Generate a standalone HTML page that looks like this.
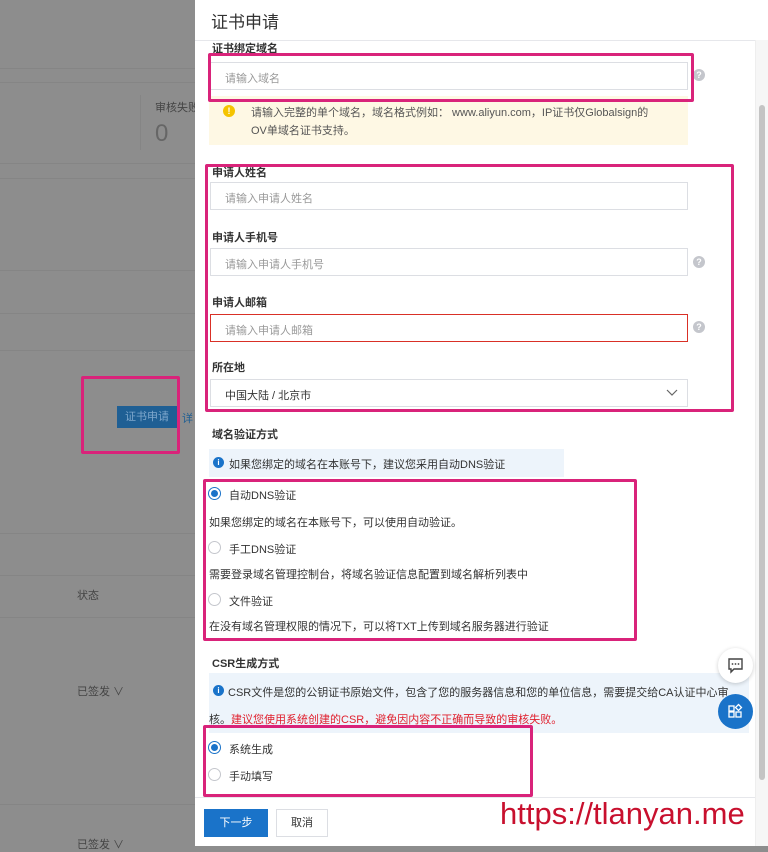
<!DOCTYPE html>
<html style="background:#8d8d8d"><head><meta charset="utf-8"><style>
*{margin:0;padding:0;box-sizing:border-box}
body{width:768px;height:846px;overflow:hidden;position:relative;background:#8d8d8d;font-family:"Liberation Sans","Noto Sans CJK SC",sans-serif;font-size:11px;color:#333}
.bg{position:absolute;left:0;top:0;width:768px;height:846px;background:#8d8d8d}
.a{position:absolute;white-space:nowrap}
.hl{position:absolute;left:0;width:195px;height:1px;background:#858585}
.panel{position:absolute;left:195px;top:0;width:573px;height:846px;background:#fff}
.lbl{position:absolute;left:212px;font-weight:bold;font-size:11px;color:#333}
.inp{position:absolute;left:210px;width:478px;height:28px;border:1px solid #dcdee3;color:#999;padding:7px 14px;font-size:11px}
.q{position:absolute;left:693px;width:12px;height:12px;border-radius:50%;background:#c4c6cc;color:#fff;font-size:9px;text-align:center;line-height:12px;font-weight:bold}
.pk{position:absolute;border:3px solid #d9237a;border-radius:2px}
.rd{position:absolute;left:208px;width:13px;height:13px;border-radius:50%;border:1px solid #c4c6cc;background:#fff}
.rd.on{border:1px solid #1a73c9}
.rd.on:after{content:"";position:absolute;left:2px;top:2px;width:7px;height:7px;border-radius:50%;background:#1a73c9}
.t{position:absolute;font-size:11px;color:#333;white-space:nowrap}
</style></head><body>
<div class="bg"></div>
<div class="hl" style="top:68px"></div>
<div class="hl" style="top:82px"></div>
<div class="hl" style="top:163px"></div>
<div class="hl" style="top:178px"></div>
<div class="hl" style="top:270px"></div>
<div class="hl" style="top:313px"></div>
<div class="hl" style="top:350px"></div>
<div class="hl" style="top:533px"></div>
<div class="hl" style="top:575px"></div>
<div class="hl" style="top:617px"></div>
<div class="hl" style="top:804px"></div>
<div style="position:absolute;left:140px;top:95px;width:1px;height:55px;background:#858585"></div>
<div class="a" style="left:155px;top:99px;color:#444;font-size:11px">审核失败</div>
<div class="a" style="left:155px;top:120px;color:#666;font-size:24px">0</div>
<div class="a" style="left:117px;top:406px;width:60px;height:22px;background:#1f5f94;color:#7ea7cc;text-align:center;line-height:22px">证书申请</div>
<div class="a" style="left:182px;top:410px;color:#1f5f94">详</div>
<div class="pk" style="left:81px;top:376px;width:99px;height:78px"></div>
<div class="a" style="left:77px;top:587px;color:#444">状态</div>
<div class="a" style="left:77px;top:683px;color:#444">已签发 ∨</div>
<div class="a" style="left:77px;top:836px;color:#444">已签发 ∨</div>

<div class="panel"></div>
<div class="a" style="left:211px;top:8px;font-size:17px;color:#333">证书申请</div>
<div style="position:absolute;left:195px;top:40px;width:560px;height:1px;background:#e6e7eb"></div>
<div style="position:absolute;left:755px;top:40px;width:13px;height:806px;background:#f6f6f6;border-left:1px solid #eee"></div>
<div style="position:absolute;left:759px;top:105px;width:6px;height:675px;background:#c4c4c4;border-radius:3px"></div>

<div class="lbl" style="top:40px">证书绑定域名</div>
<div class="inp" style="top:62px">请输入域名</div>
<div class="q" style="top:69px">?</div>
<div style="position:absolute;left:209px;top:96px;width:479px;height:49px;background:#fef8e4"></div>
<div style="position:absolute;left:223px;top:105px;width:12px;height:12px;border-radius:50%;background:#f5c400;color:#fff;font-size:9px;text-align:center;line-height:12px;font-weight:bold">!</div>
<div class="t" style="left:251px;top:104px;color:#555">请输入完整的单个域名，域名格式例如： www.aliyun.com，IP证书仅Globalsign的</div>
<div class="t" style="left:251px;top:122px;color:#555">OV单域名证书支持。</div>
<div class="pk" style="left:208px;top:53px;width:486px;height:49px"></div>

<div class="lbl" style="top:164px">申请人姓名</div>
<div class="inp" style="top:182px">请输入申请人姓名</div>
<div class="lbl" style="top:229px">申请人手机号</div>
<div class="inp" style="top:248px">请输入申请人手机号</div>
<div class="q" style="top:256px">?</div>
<div class="lbl" style="top:294px">申请人邮箱</div>
<div class="inp" style="top:314px;border-color:#d93026">请输入申请人邮箱</div>
<div class="q" style="top:321px">?</div>
<div class="lbl" style="top:359px">所在地</div>
<div class="inp" style="top:379px;color:#333">中国大陆 / 北京市</div>
<svg class="a" style="left:666px;top:388px" width="12" height="10"><path d="M1 2 L6 7 L11 2" stroke="#666" fill="none" stroke-width="1.2"/></svg>
<div class="pk" style="left:205px;top:164px;width:529px;height:248px"></div>

<div class="lbl" style="top:426px">域名验证方式</div>
<div style="position:absolute;left:209px;top:449px;width:355px;height:28px;background:#edf4fb"></div>
<div style="position:absolute;left:213px;top:457px;width:11px;height:11px;border-radius:50%;background:#1a73c9;color:#fff;font-size:8px;text-align:center;line-height:11px;font-weight:bold">i</div>
<div class="t" style="left:229px;top:456px">如果您绑定的域名在本账号下，建议您采用自动DNS验证</div>
<div class="rd on" style="top:487px"></div><div class="t" style="left:229px;top:487px">自动DNS验证</div>
<div class="t" style="left:209px;top:514px">如果您绑定的域名在本账号下，可以使用自动验证。</div>
<div class="rd" style="top:541px"></div><div class="t" style="left:229px;top:541px">手工DNS验证</div>
<div class="t" style="left:209px;top:566px">需要登录域名管理控制台，将域名验证信息配置到域名解析列表中</div>
<div class="rd" style="top:593px"></div><div class="t" style="left:229px;top:593px">文件验证</div>
<div class="t" style="left:209px;top:618px">在没有域名管理权限的情况下，可以将TXT上传到域名服务器进行验证</div>
<div class="pk" style="left:203px;top:479px;width:434px;height:162px"></div>

<div class="lbl" style="top:655px">CSR生成方式</div>
<div style="position:absolute;left:209px;top:673px;width:540px;height:60px;background:#edf4fb"></div>
<div style="position:absolute;left:213px;top:685px;width:11px;height:11px;border-radius:50%;background:#1a73c9;color:#fff;font-size:8px;text-align:center;line-height:11px;font-weight:bold">i</div>
<div class="t" style="left:228px;top:684px">CSR文件是您的公钥证书原始文件，包含了您的服务器信息和您的单位信息，需要提交给CA认证中心审</div>
<div class="t" style="left:209px;top:711px">核。<span style="color:#e0202e">建议您使用系统创建的CSR，避免因内容不正确而导致的审核失败。</span></div>
<div class="rd on" style="top:741px"></div><div class="t" style="left:229px;top:741px">系统生成</div>
<div class="rd" style="top:768px"></div><div class="t" style="left:229px;top:768px">手动填写</div>
<div class="pk" style="left:203px;top:725px;width:330px;height:72px"></div>

<div style="position:absolute;left:195px;top:797px;width:560px;height:1px;background:#e6e7eb"></div>
<div class="a" style="left:204px;top:809px;width:64px;height:28px;background:#1a73c9;color:#fff;text-align:center;line-height:28px">下一步</div>
<div class="a" style="left:276px;top:809px;width:52px;height:28px;border:1px solid #dcdee3;background:#fff;color:#333;text-align:center;line-height:26px">取消</div>
<div class="a" style="left:500px;top:796px;font-size:31px;color:#c8102e;font-family:'Liberation Sans',sans-serif">https://tlanyan.me</div>

<div style="position:absolute;left:718px;top:648px;width:35px;height:35px;border-radius:50%;background:#fff;box-shadow:0 1px 4px rgba(0,0,0,.2)"></div>
<svg class="a" style="left:727px;top:657px" width="17" height="17"><path d="M2 2 H15 V12 H7 L4 15 V12 H2 Z" fill="none" stroke="#444" stroke-width="1.4"/><circle cx="5.5" cy="7" r=".9" fill="#444"/><circle cx="8.5" cy="7" r=".9" fill="#444"/><circle cx="11.5" cy="7" r=".9" fill="#444"/></svg>
<div style="position:absolute;left:718px;top:694px;width:35px;height:35px;border-radius:50%;background:#1a73c9"></div>
<svg class="a" style="left:727px;top:703px" width="17" height="17"><g fill="none" stroke="#fff" stroke-width="1.3"><rect x="2" y="9" width="5" height="5"/><rect x="9" y="9" width="5" height="5"/><rect x="2" y="3" width="5" height="5"/><path d="M11.5 1.5 L14.5 4.5 L11.5 7.5 L8.5 4.5 Z"/></g></svg>
</body></html>
